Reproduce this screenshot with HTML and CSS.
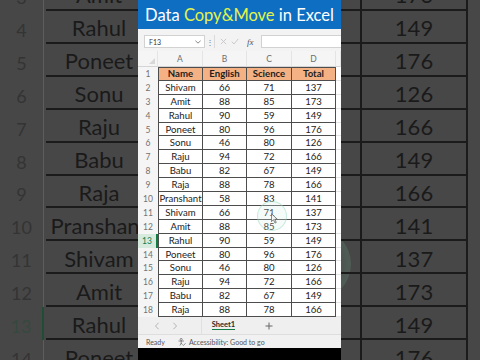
FILE: index.html
```html
<!DOCTYPE html>
<html>
<head>
<meta charset="utf-8">
<title>Data Copy&amp;Move in Excel</title>
<link rel="stylesheet" href="styles.css">
</head>
<body>
<div class="stage">
  <div class="side side-left">
    <div class="brows">
      <div class="brow"><div class="bnum">3</div><div class="bcell">Amit</div></div>
      <div class="brow"><div class="bnum">4</div><div class="bcell">Rahul</div></div>
      <div class="brow"><div class="bnum">5</div><div class="bcell">Poneet</div></div>
      <div class="brow"><div class="bnum">6</div><div class="bcell">Sonu</div></div>
      <div class="brow"><div class="bnum">7</div><div class="bcell">Raju</div></div>
      <div class="brow"><div class="bnum">8</div><div class="bcell">Babu</div></div>
      <div class="brow"><div class="bnum">9</div><div class="bcell">Raja</div></div>
      <div class="brow"><div class="bnum">10</div><div class="bcell">Pranshant</div></div>
      <div class="brow"><div class="bnum">11</div><div class="bcell">Shivam</div></div>
      <div class="brow"><div class="bnum">12</div><div class="bcell">Amit</div></div>
      <div class="brow"><div class="bnum sel">13</div><div class="bcell">Rahul</div></div>
      <div class="brow"><div class="bnum">14</div><div class="bcell">Poneet</div></div>
    </div>
  </div>

  <div class="panel">
    <div class="title">Data&nbsp;<span class="hl">Copy&amp;Move</span>&nbsp;in Excel</div>
    <div class="fbar">
      <div class="namebox"><span>F13</span><svg class="chev" viewBox="0 0 8 5" width="6" height="4"><path d="M0.5 0.8 L4 4 L7.5 0.8" fill="none" stroke="#666" stroke-width="1"/></svg></div>
      <div class="dots">⋮</div>
      <div class="fbtns">
        <svg viewBox="0 0 8 8" width="7" height="7"><path d="M1 1 L7 7 M7 1 L1 7" stroke="#c4c4c4" stroke-width="1"/></svg>
        <svg viewBox="0 0 9 8" width="8" height="7"><path d="M0.8 4.2 L3.4 6.8 L8.2 1" fill="none" stroke="#c4c4c4" stroke-width="1"/></svg>
        <span class="fx">fx</span>
      </div>
      <div class="finput"></div>
    </div>

    <div class="sheet">
      <div class="ch corner"></div><div class="ch">A</div><div class="ch">B</div><div class="ch">C</div><div class="ch">D</div><div class="ch"></div>

      <div class="rh">1</div><div class="c h a">Name</div><div class="c h">English</div><div class="c h">Science</div><div class="c h">Total</div><div class="e"></div>
      <div class="rh">2</div><div class="c a">Shivam</div><div class="c">66</div><div class="c">71</div><div class="c">137</div><div class="e"></div>
      <div class="rh">3</div><div class="c a">Amit</div><div class="c">88</div><div class="c">85</div><div class="c">173</div><div class="e"></div>
      <div class="rh">4</div><div class="c a">Rahul</div><div class="c">90</div><div class="c">59</div><div class="c">149</div><div class="e"></div>
      <div class="rh">5</div><div class="c a">Poneet</div><div class="c">80</div><div class="c">96</div><div class="c">176</div><div class="e"></div>
      <div class="rh">6</div><div class="c a">Sonu</div><div class="c">46</div><div class="c">80</div><div class="c">126</div><div class="e"></div>
      <div class="rh">7</div><div class="c a">Raju</div><div class="c">94</div><div class="c">72</div><div class="c">166</div><div class="e"></div>
      <div class="rh">8</div><div class="c a">Babu</div><div class="c">82</div><div class="c">67</div><div class="c">149</div><div class="e"></div>
      <div class="rh">9</div><div class="c a">Raja</div><div class="c">88</div><div class="c">78</div><div class="c">166</div><div class="e"></div>
      <div class="rh">10</div><div class="c a">Pranshant</div><div class="c">58</div><div class="c">83</div><div class="c">141</div><div class="e"></div>
      <div class="rh">11</div><div class="c a">Shivam</div><div class="c">66</div><div class="c">71</div><div class="c">137</div><div class="e"></div>
      <div class="rh">12</div><div class="c a">Amit</div><div class="c">88</div><div class="c">85</div><div class="c">173</div><div class="e"></div>
      <div class="rh sel">13</div><div class="c a">Rahul</div><div class="c">90</div><div class="c">59</div><div class="c">149</div><div class="e"></div>
      <div class="rh">14</div><div class="c a">Poneet</div><div class="c">80</div><div class="c">96</div><div class="c">176</div><div class="e"></div>
      <div class="rh">15</div><div class="c a">Sonu</div><div class="c">46</div><div class="c">80</div><div class="c">126</div><div class="e"></div>
      <div class="rh">16</div><div class="c a">Raju</div><div class="c">94</div><div class="c">72</div><div class="c">166</div><div class="e"></div>
      <div class="rh">17</div><div class="c a">Babu</div><div class="c">82</div><div class="c">67</div><div class="c">149</div><div class="e"></div>
      <div class="rh">18</div><div class="c a">Raja</div><div class="c">88</div><div class="c">78</div><div class="c">166</div><div class="e"></div>
    </div>

    <div class="tabs">
      <svg class="tnav" viewBox="0 0 6 8" width="6" height="8"><path d="M4.5 0.8 L1.5 4 L4.5 7.2" fill="none" stroke="#b4b4b4" stroke-width="1"/></svg>
      <svg class="tnav tnext" viewBox="0 0 6 8" width="6" height="8"><path d="M1.5 0.8 L4.5 4 L1.5 7.2" fill="none" stroke="#b4b4b4" stroke-width="1"/></svg>
      <div class="tab"><span class="tabname">Sheet1</span></div>
      <svg class="tplus" viewBox="0 0 8 8" width="8" height="8"><path d="M4 0.5 V7.5 M0.5 4 H7.5" stroke="#666" stroke-width="1"/></svg>
    </div>

    <div class="status">
      <span class="ready">Ready</span>
      <svg class="acc" viewBox="0 0 10 10" width="8" height="8"><circle cx="4" cy="1.8" r="1.3" fill="none" stroke="#555" stroke-width="0.8"/><path d="M0.6 3.8 H7.4 M4 3.8 V6.2 M4 6.2 L2.4 9.4 M4 6.2 L5 8" fill="none" stroke="#555" stroke-width="0.8"/><path d="M5.6 8.2 L6.8 9.3 L9.4 6.6" fill="none" stroke="#555" stroke-width="0.8"/></svg>
      <span class="acctext">Accessibility: Good to go</span>
    </div>
    <div class="black"></div>

    <div class="click"></div>
    <svg class="pointer" viewBox="0 0 8 12" width="7" height="11"><path d="M0.5 0.5 L0.5 9.5 L2.8 7.4 L4.6 11.2 L6 10.5 L4.3 6.9 L7.3 6.9 Z" fill="#f4f4f4" stroke="#555" stroke-width="0.8"/></svg>
  </div>

  <div class="side side-right">
    <div class="blob"></div>
    <div class="brows">
      <div class="rrow"><div class="rc"></div><div class="rd">173</div><div class="re"></div></div>
      <div class="rrow"><div class="rc"></div><div class="rd">149</div><div class="re"></div></div>
      <div class="rrow"><div class="rc"></div><div class="rd">176</div><div class="re"></div></div>
      <div class="rrow"><div class="rc"></div><div class="rd">126</div><div class="re"></div></div>
      <div class="rrow"><div class="rc"></div><div class="rd">166</div><div class="re"></div></div>
      <div class="rrow"><div class="rc"></div><div class="rd">149</div><div class="re"></div></div>
      <div class="rrow"><div class="rc"></div><div class="rd">166</div><div class="re"></div></div>
      <div class="rrow"><div class="rc"></div><div class="rd">141</div><div class="re"></div></div>
      <div class="rrow"><div class="rc"></div><div class="rd">137</div><div class="re"></div></div>
      <div class="rrow"><div class="rc"></div><div class="rd">173</div><div class="re"></div></div>
      <div class="rrow"><div class="rc"></div><div class="rd">149</div><div class="re"></div></div>
      <div class="rrow"><div class="rc"></div><div class="rd">176</div><div class="re"></div></div>
    </div>
  </div>
</div>
</body>
</html>
```

FILE: styles.css
```css
* { box-sizing: border-box; margin: 0; padding: 0; }
html, body { width: 480px; height: 360px; overflow: hidden; }
body { background: #474747; font-family: Lato, "Liberation Sans", sans-serif; }

.stage { display: flex; width: 480px; height: 360px; overflow: hidden; }

/* blurred zoomed background */
.side { position: relative; height: 360px; overflow: hidden; }
.side-left { width: 138px; flex: none; }
.side-right { flex: 1; }
.brows { position: relative; margin-top: -22px; display: flex; flex-direction: column; }
.brow, .rrow { display: flex; height: 32.93px; flex: none; }
.bnum {
  width: 44px; flex: none; border-right: 1.5px solid #5d5d5d;
  color: #343434; font-size: 18px; padding-top: 5px;
  display: flex; align-items: center; justify-content: center;
}
.bnum.sel { color: #36493f; border-right: 2px solid #1f4d36; }
.bcell {
  width: 106px; flex: none; margin-left: 2px; border-bottom: 2px solid #1b1b1b;
  color: #1a1a1a; font-size: 22px; padding-top: 3px; white-space: nowrap;
  display: flex; align-items: center; justify-content: center;
}
.rc { width: 21px; flex: none; border-right: 2px solid #1b1b1b; border-bottom: 2px solid #1b1b1b; }
.rd {
  width: 106px; flex: none; border-right: 2px solid #1b1b1b; border-bottom: 2px solid #1b1b1b;
  color: #1a1a1a; font-size: 22px; padding-top: 3px;
  display: flex; align-items: center; justify-content: center;
}
.re { flex: 1; }
.blob {
  position: absolute; left: -62px; top: 228px; width: 72px; height: 72px; border-radius: 50%;
  background: radial-gradient(circle, rgba(110,170,140,0.10) 40%, rgba(110,170,140,0.22) 70%, rgba(110,170,140,0) 100%);
}

/* central excel panel */
.panel {
  position: relative; width: 203px; flex: none; height: 360px;
  display: flex; flex-direction: column; background: #f3f3f3;
}
.title {
  height: 29px; flex: none; background: #0e6ec1; color: #ffffff;
  font-size: 16.5px; white-space: nowrap;
  display: flex; align-items: center; justify-content: center;
}
.hl { color: #e4f44a; }

.fbar { height: 22px; flex: none; display: flex; align-items: flex-start; padding: 6px 0 0 6px; background: #f3f3f3; }
.namebox {
  width: 61px; height: 13px; background: #fff; border: 1px solid #d2d2d2;
  display: flex; align-items: center; justify-content: space-between; padding: 0 3px 0 4px;
  font-size: 7px; color: #333;
}
.dots { width: 9px; height: 13px; font-size: 8px; color: #777; display: flex; align-items: center; justify-content: center; }
.fbtns {
  width: 47px; height: 13px; display: flex; align-items: center; gap: 4px; padding-left: 5px;
  border-left: 1px solid #dadada;
}
.fx { font-family: "Liberation Serif", serif; font-style: italic; font-size: 9px; color: #555; margin-left: 4px; }
.finput { flex: 1; height: 13px; background: #fff; border: 1px solid #d2d2d2; border-right: none; }

.sheet {
  flex: none; display: grid; background: #fff;
  grid-template-columns: 20px 45px 44px 45px 44px 1fr;
  grid-template-rows: 16px repeat(18, 13.9px);
}
.ch {
  background: #f5f5f5; color: #6e6e6e; font-size: 8.5px;
  border-bottom: 1px solid #d4d4d4; border-right: 1px solid #e4e4e4;
  display: flex; align-items: center; justify-content: center;
}
.corner { position: relative; }
.corner::after {
  content: ""; position: absolute; right: 2px; bottom: 2px;
  border-left: 6px solid transparent; border-bottom: 6px solid #d8d8d8;
}
.rh {
  background: #f5f5f5; color: #727272; font-size: 8.5px;
  display: flex; align-items: center; justify-content: center;
}
.rh.sel { background: #d6ebde; color: #197a47; border-right: 2px solid #107c41; }
.c {
  border-right: 1px solid #4d4d4d; border-bottom: 1px solid #4d4d4d;
  color: #222; font-size: 9.6px; white-space: nowrap; overflow: hidden;
  display: flex; align-items: center; justify-content: center;
}
.c.a { border-left: 1px solid #4d4d4d; }
.c.h { background: #f4b183; font-weight: 700; border-top: 1px solid #4d4d4d; color: #1e1e1e; }
.e { border-bottom: 1px solid #e4e4e4; }

.tabs { height: 17px; flex: none; display: flex; align-items: center; padding-left: 16px; background: #efefef; }
.tnav { flex: none; }
.tnext { margin-left: 12px; }
.tab {
  width: 44px; height: 17px; margin-left: 23px; flex: none;
  display: flex; align-items: center; justify-content: center;
  border-left: 1px solid #e0e0e0;
}
.tabname { font-size: 7.5px; font-weight: 700; color: #2a2a2a; border-bottom: 1.5px solid #107c41; padding-bottom: 1px; line-height: 1; }
.tplus { margin-left: 20px; flex: none; }

.status {
  height: 14px; flex: none; display: flex; align-items: center; padding-left: 8px;
  background: #f1f1f1; border-top: 1px solid #dedede;
  font-size: 7px; color: #555;
}
.acc { margin-left: 13px; flex: none; }
.acctext { margin-left: 3px; }
.black { flex: 1; background: #000; }

.click {
  position: absolute; left: 119px; top: 201px; width: 30px; height: 30px; border-radius: 50%;
  border: 1px solid rgba(140, 215, 185, 0.45); background: rgba(210, 240, 228, 0.25);
}
.pointer { position: absolute; left: 133px; top: 213px; }
```
